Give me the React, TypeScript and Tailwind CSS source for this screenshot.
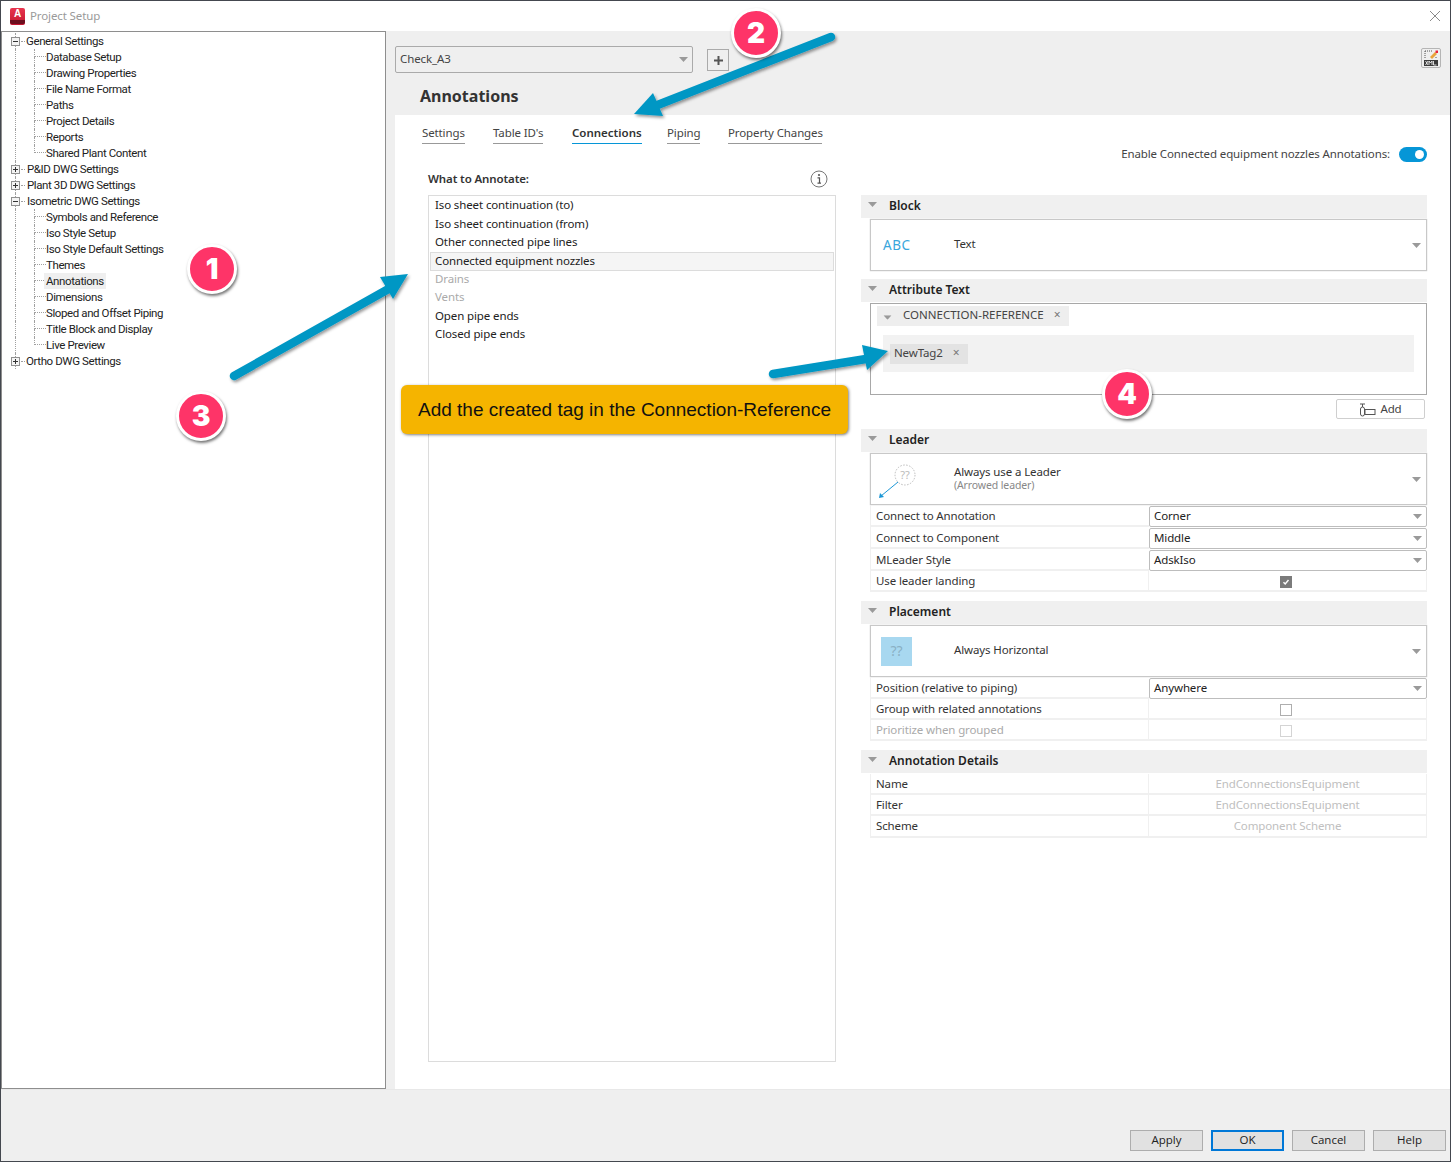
import React from "react";

const Caret = ({ className = "" }: { className?: string }) => (
  <svg width="9" height="5" viewBox="0 0 9 5" className={className}>
    <path d="M0 0H9L4.5 5Z" fill="#9a9a9a" />
  </svg>
);

const TreeTop = ({ label, open = false, ml = "ml-[5px]" }: { label: string; open?: boolean; ml?: string }) => (
  <div className="flex h-4 items-center">
    <div className="ml-[9px] flex h-4 w-[9px] flex-col items-center">
      <div className="h-[4px] w-px border-l border-dotted border-[#a0a0a0]" />
      <div className="flex h-[9px] w-[9px] shrink-0 items-center justify-center border border-[#919191] bg-[#f4f4f4]">
        <svg width="7" height="7" viewBox="0 0 7 7">
          <path d={open ? "M1 3.5H6" : "M1 3.5H6M3.5 1V6"} stroke="#333" strokeWidth="1" />
        </svg>
      </div>
      <div className="h-[3px] w-px border-l border-dotted border-[#a0a0a0]" />
    </div>
    <div className="ml-px w-[4px] border-t border-dotted border-[#a0a0a0]" />
    <span className={`${ml} pb-px text-[#222]`}>{label}</span>
  </div>
);

const TreeChild = ({ label, last = false, selected = false }: { label: string; last?: boolean; selected?: boolean }) => (
  <div className="flex h-4 items-stretch">
    <div className="ml-[13px] w-[19px] border-l border-dotted border-[#a0a0a0]" />
    <div className="w-[12px]">
      <div className="h-[8px] w-[12px] border-b border-l border-dotted border-[#a0a0a0]" />
      {!last && <div className="h-[8px] border-l border-dotted border-[#a0a0a0]" />}
    </div>
    <span className={`flex items-center pb-px text-[#222] ${selected ? "-ml-[2px] bg-[#efefef] px-[2px]" : ""}`}>{label}</span>
  </div>
);

const Tree = () => (
  <div className="h-[1058px] w-[385px] shrink-0 border border-[#8e8e8e] bg-white pt-[1px] text-[11.5px] leading-4 tracking-[-0.4px] [font-family:Roboto,sans-serif]">
    <TreeTop label="General Settings" open ml="ml-[1px]" />
    {["Database Setup", "Drawing Properties", "File Name Format", "Paths", "Project Details", "Reports"].map((t) => (
      <TreeChild key={t} label={t} />
    ))}
    <TreeChild label="Shared Plant Content" last />
    <TreeTop label="P&ID DWG Settings" ml="ml-[2px]" />
    <TreeTop label="Plant 3D DWG Settings" ml="ml-[2px]" />
    <TreeTop label="Isometric DWG Settings" open ml="ml-[2px]" />
    {["Symbols and Reference", "Iso Style Setup", "Iso Style Default Settings", "Themes"].map((t) => (
      <TreeChild key={t} label={t} />
    ))}
    <TreeChild label="Annotations" selected />
    {["Dimensions", "Sloped and Offset Piping", "Title Block and Display"].map((t) => (
      <TreeChild key={t} label={t} />
    ))}
    <TreeChild label="Live Preview" last />
    <TreeTop label="Ortho DWG Settings" ml="ml-[1px]" />
  </div>
);

const Tab = ({ label, w, ml, active = false }: { label: string; w: string; ml: string; active?: boolean }) => (
  <div
    className={`${w} ${ml} h-[19px] whitespace-nowrap border-b leading-[16px] ${
      active ? "border-[#0696d7] font-semibold tracking-normal text-[#333]" : "border-[#999] text-[#444]"
    }`}
  >
    {label}
  </div>
);

const listItems: [string, string][] = [
  ["Iso sheet continuation (to)", "h-[19px] pb-[2px]"],
  ["Iso sheet continuation (from)", "h-[18px] pb-px"],
  ["Other connected pipe lines", "h-[19px] pb-[2px]"],
];

const ListRow = ({ label, cls, disabled = false }: { label: string; cls: string; disabled?: boolean }) => (
  <div className={`${cls} flex items-center pl-[5px] ${disabled ? "text-[#aaa]" : "text-[#222]"}`}>{label}</div>
);

const SectionHead = ({ label }: { label: string }) => (
  <div className="flex h-[23px] items-center bg-[#f0f0f0] pb-px text-[12px] font-semibold tracking-normal text-[#222]">
    <Caret className="mb-[4px] ml-[7px]" />
    <span className="ml-[12px]">{label}</span>
  </div>
);

const PickBox = ({ icon, children }: { icon: React.ReactNode; children: React.ReactNode }) => (
  <div className="ml-[9px] mt-px flex h-[52px] items-center border border-[#c8c8c8] shadow-[0_0_1px_#bbb]">
    <div className="flex w-[83px] shrink-0 items-center pl-[12px]">{icon}</div>
    <div className="flex-1 text-[#333]">{children}</div>
    <Caret className="mr-[5px]" />
  </div>
);

const Row = ({
  label,
  h = "h-[21px]",
  disabled = false,
  children,
}: {
  label: string;
  h?: string;
  disabled?: boolean;
  children: React.ReactNode;
}) => (
  <div className={`${h} ml-[9px] flex items-stretch border-b-2 border-l border-r border-[#f0f0f0]`}>
    <div className={`flex w-[278px] shrink-0 items-center border-r border-[#f0f0f0] pl-[5px] ${disabled ? "text-[#aaa]" : "text-[#333]"}`}>
      {label}
    </div>
    <div className="flex flex-1 items-center justify-center">{children}</div>
  </div>
);

const SelectRow = ({ label, value }: { label: string; value: string }) => (
  <div className="ml-[9px] flex h-[22px] items-stretch border-l border-[#f0f0f0]">
    <div className="flex w-[278px] shrink-0 items-center border-b-2 border-[#f0f0f0] pl-[5px] pt-[2px] text-[#333]">{label}</div>
    <div className="mt-px flex h-[21px] flex-1 items-center justify-between rounded-[2px] border border-[#bdbdbd] pb-[2px] pl-[4px] pr-[4px] text-[#222]">
      {value}
      <Caret className="mt-[2px]" />
    </div>
  </div>
);

const Check = ({ on = false, dim = false }: { on?: boolean; dim?: boolean }) =>
  on ? (
    <div className="-ml-[3px] mt-[2px] flex h-3 w-3 items-center justify-center bg-[#7b7b7b]">
      <svg width="8" height="8" viewBox="0 0 8 8">
        <path d="M1.5 4.2L3.2 6L6.5 2" stroke="#fff" strokeWidth="1.4" fill="none" />
      </svg>
    </div>
  ) : (
    <div className={`-ml-[3px] mt-[2px] h-3 w-3 border ${dim ? "border-[#d4d4d4]" : "border-[#aeaeae]"}`} />
  );

const Value = ({ text }: { text: string }) => <span className="text-[#c0c0c0]">{text}</span>;

const Properties = () => (
  <div className="ml-[25px] mt-[25px] w-[566px] leading-4">
    <SectionHead label="Block" />
    <PickBox icon={<span className="text-[13.5px] tracking-[0.5px] text-[#39a6dc]">ABC</span>}>
      <span className="relative -top-px">Text</span>
    </PickBox>

    <div className="mt-[8px]">
      <SectionHead label="Attribute Text" />
    </div>
    <div className="ml-[9px] mt-px h-[92px] border border-[#a8a8a8] pl-[6px] pt-[2px]">
      <div className="flex h-[20px] w-[192px] items-center bg-[#eeeeee] pb-[3px] tracking-normal text-[#444]">
        <Caret className="ml-[6px] mt-[5px] scale-90" />
        <span className="ml-[11px]">CONNECTION-REFERENCE</span>
        <span className="ml-[10px] text-[12px] text-[#777]">×</span>
      </div>
      <div className="ml-[6px] mt-[9px] flex h-[37px] w-[531px] items-center bg-[#f2f2f2] pl-[7px]">
        <div className="flex h-[20px] w-[78px] items-center bg-[#e3e3e3] pb-px pl-[4px] text-[#444]">
          NewTag2
          <span className="ml-[10px] text-[12px] text-[#777]">×</span>
        </div>
      </div>
    </div>
    <div className="mr-[2px] mt-[4px] flex justify-end">
      <div className="flex h-[20px] w-[89px] items-center justify-center gap-[4px] rounded-[2px] border border-[#cfcfcf] pb-px text-[#444]">
        <svg width="17" height="14" viewBox="0 0 17 14" className="mt-[2px]">
          <path d="M1 1H6M3.5 1V4" stroke="#555" fill="none" />
          <rect x="1.5" y="4" width="4" height="9" rx="2" stroke="#555" fill="none" />
          <rect x="6" y="6.5" width="10" height="5" stroke="#555" fill="none" />
        </svg>
        Add
      </div>
    </div>

    <div className="mt-[10px]">
      <SectionHead label="Leader" />
    </div>
    <PickBox
      icon={
        <svg width="40" height="36" viewBox="0 0 40 36" className="-ml-[4px] mt-[2px]">
          <circle cx="26" cy="13" r="10" fill="none" stroke="#bbb" strokeDasharray="1.5 1.5" />
          <text x="26" y="17" textAnchor="middle" fontSize="11" fill="#bbb">??</text>
          <path d="M19 20L2 34" stroke="#1b97d6" fill="none" />
          <path d="M0 36L1 31L5 35Z" fill="#1b97d6" />
        </svg>
      }
    >
      <div className="relative -top-px">
        <div className="leading-[14px]">Always use a Leader</div>
        <div className="text-[10.5px] leading-[13px] text-[#888]">(Arrowed leader)</div>
      </div>
    </PickBox>
    <SelectRow label="Connect to Annotation" value="Corner" />
    <SelectRow label="Connect to Component" value="Middle" />
    <SelectRow label="MLeader Style" value="AdskIso" />
    <Row label="Use leader landing">
      <Check on />
    </Row>

    <div className="mt-[9px]">
      <SectionHead label="Placement" />
    </div>
    <PickBox
      icon={
        <div className="-ml-[2px] flex h-[29px] w-[31px] items-center justify-center bg-[#a8d8f0] text-[14px] text-[#8ab0c4]">??</div>
      }
    >
      <span className="relative -top-px">Always Horizontal</span>
    </PickBox>
    <SelectRow label="Position (relative to piping)" value="Anywhere" />
    <Row label="Group with related annotations">
      <Check />
    </Row>
    <Row label="Prioritize when grouped" disabled>
      <Check dim />
    </Row>

    <div className="mt-[9px]">
      <SectionHead label="Annotation Details" />
    </div>
    <div className="h-px" />
    <Row label="Name">
      <Value text="EndConnectionsEquipment" />
    </Row>
    <Row label="Filter">
      <Value text="EndConnectionsEquipment" />
    </Row>
    <Row label="Scheme" h="h-[22px]">
      <Value text="Component Scheme" />
    </Row>
  </div>
);

const Badge = ({ n, cls }: { n: string; cls: string }) => (
  <div
    className={`${cls} absolute flex h-[50px] w-[50px] items-center justify-center rounded-full border-[3px] border-white bg-[#fe3468] text-[28px] font-black text-white shadow-[1px_2px_3px_rgba(0,0,0,0.55)] [font-family:Inter,sans-serif]`}
  >
    {n}
  </div>
);

const Arrows = () => (
  <svg width="1451" height="1162" viewBox="0 0 1451 1162" className="pointer-events-none absolute -left-px -top-px">
    <defs>
      <filter id="s" x="-20%" y="-20%" width="140%" height="140%">
        <feDropShadow dx="1.5" dy="2" stdDeviation="1.5" floodColor="#000" floodOpacity="0.4" />
      </filter>
    </defs>
    <g filter="url(#s)" fill="#0097c4" stroke="#0097c4">
      <path d="M831 37L655 106" strokeWidth="8.5" strokeLinecap="round" fill="none" />
      <path d="M634 114L653 93L663 116Z" strokeWidth="0" />
      <path d="M234 376L392 287" strokeWidth="8.5" strokeLinecap="round" fill="none" />
      <path d="M408 274L380 277L393 299Z" strokeWidth="0" />
      <path d="M773 374L866 359" strokeWidth="8.5" strokeLinecap="round" fill="none" />
      <path d="M888 351L862 345L867 370Z" strokeWidth="0" />
    </g>
  </svg>
);

export default function App() {
  return (
    <div className="relative h-[1162px] w-[1451px] overflow-hidden border border-[#44484f] bg-white text-[11.5px] tracking-[-0.12px] [font-family:'Noto_Sans',sans-serif]">
      <div className="flex h-[30px] items-center">
        <div className="ml-[9px] flex h-[17px] w-[15px] flex-col items-center rounded-[2px] bg-gradient-to-b from-[#e8344e] to-[#c4122f]">
          <span className="text-[10px] font-bold leading-[12px] text-white [font-family:'Liberation_Sans',sans-serif]">A</span>
          <div className="h-[4px] w-full rounded-b-[2px] bg-[#6d0f1f]" />
        </div>
        <span className="ml-[5px] text-[#9a9a9a]">Project Setup</span>
        <svg width="12" height="12" viewBox="0 0 12 12" className="ml-auto mr-[9px]">
          <path d="M1 1L11 11M11 1L1 11" stroke="#8a8a8a" fill="none" />
        </svg>
      </div>

      <div className="flex h-[1058px]">
        <Tree />
        <div className="flex min-w-0 flex-1 flex-col bg-[#efefef]">
          <div className="h-[84px] shrink-0">
            <div className="flex items-start pl-[9px] pt-[15px]">
              <div className="flex h-[27px] w-[298px] items-center justify-between rounded-[2px] border border-[#aaaaaa] pb-px pl-[4px] pr-[4px] text-[#444]">
                Check_A3
                <Caret />
              </div>
              <div className="ml-[14px] mt-[3px] flex h-[22px] w-[22px] items-center justify-center border border-[#aaaaaa]">
                <svg width="11" height="11" viewBox="0 0 11 11">
                  <path d="M5.5 1V10M1 5.5H10" stroke="#555" strokeWidth="2" fill="none" />
                </svg>
              </div>
              <div className="ml-auto mr-[9px] mt-[2px] flex h-[20px] w-[20px] items-center justify-center rounded-[2px] border border-[#b5b5b5]">
                <svg width="16" height="16" viewBox="0 0 16 16">
                  <path d="M2 1H9M2 1V9M13 7V9" stroke="#555" strokeDasharray="1 1" fill="none" />
                  <path d="M7 7L12 2L14 4L9 9Z" fill="#e8a33c" />
                  <path d="M12.5 0.5H15V3H12.5Z" fill="#e8213a" />
                  <rect x="1" y="10" width="14" height="6" fill="#3a3a3a" />
                  <path d="M2.5 11L5 15M5 11L2.5 15M6 15V11L7.5 13L9 11V15M10.5 11V15H13.5" stroke="#fff" strokeWidth="0.8" fill="none" />
                </svg>
              </div>
            </div>
            <div className="ml-[34px] mt-[13px] text-[16px] font-bold leading-5 tracking-normal text-[#333]">Annotations</div>
          </div>

          <div className="ml-[9px] flex-1 bg-white">
            <div className="flex pl-[27px] pt-[10px]">
              <Tab label="Settings" w="w-[43px]" ml="" />
              <Tab label="Table ID's" w="w-[50px]" ml="ml-[28px]" />
              <Tab label="Connections" w="w-[70px]" ml="ml-[29px]" active />
              <Tab label="Piping" w="w-[33px]" ml="ml-[25px]" />
              <Tab label="Property Changes" w="w-[94px]" ml="ml-[28px]" />
            </div>
            <div className="mt-[2px] flex h-4 items-center justify-end gap-[9px] pr-[23px] text-[#444]">
              Enable Connected equipment nozzles Annotations:
              <div className="flex h-[15px] w-[28px] items-center justify-end rounded-full bg-[#0696d7] pr-[3px]">
                <div className="h-[9px] w-[9px] rounded-full bg-white" />
              </div>
            </div>
            <div className="mt-[8px] flex items-start">
              <div className="ml-[33px] w-[408px]">
                <div className="flex h-[18px] items-center justify-between pr-[8px] font-semibold text-[#333]">
                  <span className="pb-px">What to Annotate:</span>
                  <svg width="18" height="18" viewBox="0 0 18 18">
                    <circle cx="9" cy="9" r="8" fill="none" stroke="#777" />
                    <circle cx="9" cy="5" r="1.1" fill="#555" />
                    <path d="M7.5 7.8H9.5V13M7.5 13.2H11" stroke="#555" strokeWidth="1.2" fill="none" />
                  </svg>
                </div>
                <div className="mt-[7px] h-[867px] border border-[#dcdcdc] px-px">
                  {listItems.map(([t, c]) => (
                    <ListRow key={t} label={t} cls={c} />
                  ))}
                  <div className="flex h-[19px] items-center border border-[#dcdcdc] bg-[#f5f5f5] pb-[2px] pl-[4px] text-[#222]">
                    Connected equipment nozzles
                  </div>
                  <ListRow label="Drains" cls="h-[18px] pb-[2px]" disabled />
                  <ListRow label="Vents" cls="h-[18px] pb-[2px]" disabled />
                  <ListRow label="Open pipe ends" cls="h-[19px] pb-[2px]" />
                  <ListRow label="Closed pipe ends" cls="h-[18px] pb-[2px]" />
                </div>
              </div>
              <Properties />
            </div>
          </div>
        </div>
      </div>

      <div className="flex h-[72px] items-start justify-end gap-[8px] border-t border-[#e8e8e8] bg-[#efefef] pr-[4px] pt-[40px] tracking-normal [font-family:'Open_Sans',sans-serif]">
        {["Apply", "OK", "Cancel", "Help"].map((b) => (
          <div
            key={b}
            className={`flex h-[21px] w-[73px] items-center justify-center bg-[#e1e1e1] pb-px text-[#222] ${
              b === "OK" ? "border-2 border-[#0078d7]" : "border border-[#adadad]"
            }`}
          >
            {b}
          </div>
        ))}
      </div>

      <Arrows />
      <Badge n="1" cls="left-[186px] top-[243px]" />
      <Badge n="2" cls="left-[730px] top-[7px]" />
      <Badge n="3" cls="left-[175px] top-[390px]" />
      <Badge n="4" cls="left-[1101px] top-[368px]" />
      <div className="absolute left-[400px] top-[384px] flex h-[49px] w-[447px] items-center justify-center rounded-md bg-[#f5b400] pt-px text-[19px] tracking-normal text-[#111] shadow-[1px_1px_3px_rgba(0,0,0,0.5)] [font-family:'Liberation_Sans',sans-serif]">
        Add the created tag in the Connection-Reference
      </div>
    </div>
  );
}
